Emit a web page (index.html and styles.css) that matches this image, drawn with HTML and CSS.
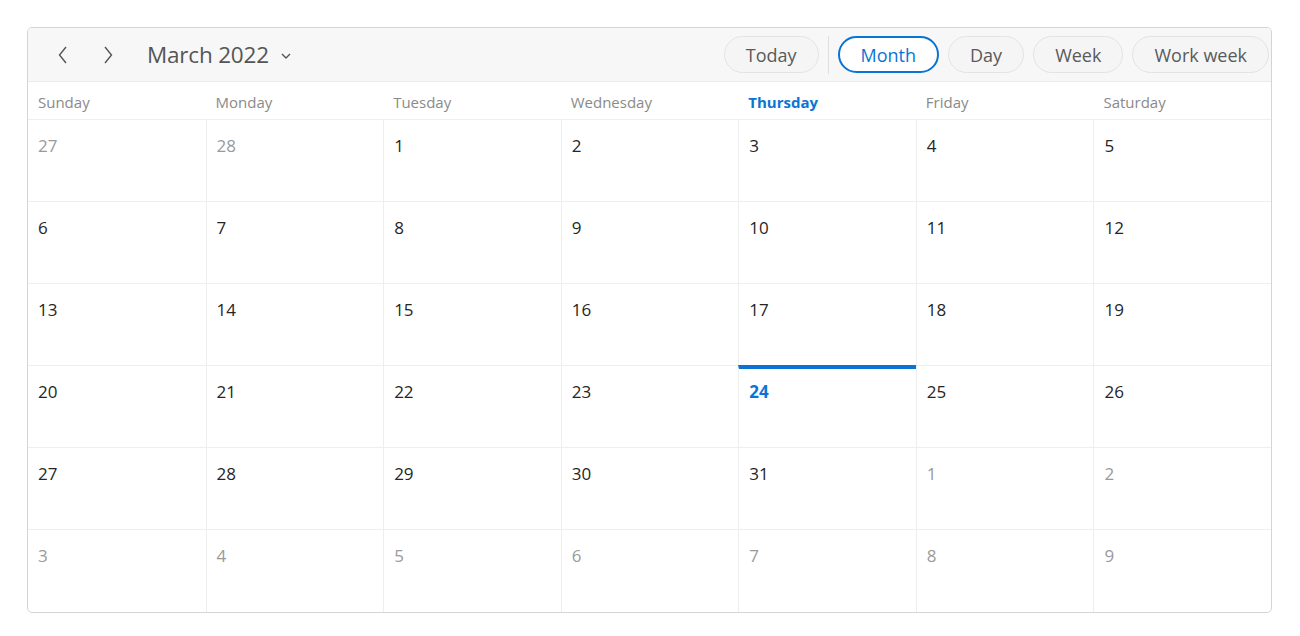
FILE: index.html
```html
<!DOCTYPE html>
<html lang="en">
<head>
  <meta charset="UTF-8">
  <title>Calendar</title>
  <link rel="stylesheet" href="styles.css">
</head>
<body>
  <div class="calendar">
    <div class="toolbar">
      <div class="nav">
        <button class="nav-btn" aria-label="Previous">
          <svg width="10" height="18" viewBox="0 0 10 18"><path d="M8 1 L1.5 9 L8 17" fill="none" stroke="#555" stroke-width="1.4"/></svg>
        </button>
        <button class="nav-btn" aria-label="Next">
          <svg width="10" height="18" viewBox="0 0 10 18"><path d="M2 1 L8.5 9 L2 17" fill="none" stroke="#555" stroke-width="1.4"/></svg>
        </button>
        <div class="title">March 2022
          <svg width="12" height="8" viewBox="0 0 12 8"><path d="M2 2 L6 6 L10 2" fill="none" stroke="#555" stroke-width="1.4"/></svg>
        </div>
      </div>
      <div class="views">
        <button class="pill">Today</button>
        <span class="sep"></span>
        <button class="pill active">Month</button>
        <button class="pill">Day</button>
        <button class="pill">Week</button>
        <button class="pill">Work week</button>
      </div>
    </div>
    <div class="weekdays">
      <div>Sunday</div>
      <div>Monday</div>
      <div>Tuesday</div>
      <div>Wednesday</div>
      <div class="current">Thursday</div>
      <div>Friday</div>
      <div>Saturday</div>
    </div>
    <div class="grid">
      <div class="cell other">27</div>
      <div class="cell other">28</div>
      <div class="cell">1</div>
      <div class="cell">2</div>
      <div class="cell">3</div>
      <div class="cell">4</div>
      <div class="cell">5</div>
      <div class="cell">6</div>
      <div class="cell">7</div>
      <div class="cell">8</div>
      <div class="cell">9</div>
      <div class="cell">10</div>
      <div class="cell">11</div>
      <div class="cell">12</div>
      <div class="cell">13</div>
      <div class="cell">14</div>
      <div class="cell">15</div>
      <div class="cell">16</div>
      <div class="cell">17</div>
      <div class="cell">18</div>
      <div class="cell">19</div>
      <div class="cell">20</div>
      <div class="cell">21</div>
      <div class="cell">22</div>
      <div class="cell">23</div>
      <div class="cell today">24</div>
      <div class="cell">25</div>
      <div class="cell">26</div>
      <div class="cell">27</div>
      <div class="cell">28</div>
      <div class="cell">29</div>
      <div class="cell">30</div>
      <div class="cell">31</div>
      <div class="cell other">1</div>
      <div class="cell other">2</div>
      <div class="cell other">3</div>
      <div class="cell other">4</div>
      <div class="cell other">5</div>
      <div class="cell other">6</div>
      <div class="cell other">7</div>
      <div class="cell other">8</div>
      <div class="cell other">9</div>
    </div>
  </div>
</body>
</html>
```

FILE: styles.css
```css
body { margin: 0; padding: 27px 28px 0 27px; background: #fff; font-family: "Open Sans", "Noto Sans", sans-serif; color: #222; }
.calendar { width: 1243px; border: 1px solid #d4d4d4; border-radius: 5px; overflow: hidden; }

.toolbar { height: 53px; display: flex; align-items: center; justify-content: space-between; background: #f7f7f7; border-bottom: 1px solid #ebebeb; }
.nav { display: flex; align-items: center; padding-left: 20px; }
.nav-btn { width: 30px; height: 30px; margin-right: 15px; border: none; background: none; padding: 0; display: flex; align-items: center; justify-content: center; cursor: pointer; }
.title { display: flex; align-items: center; gap: 11px; margin-left: 9px; font-size: 22.5px; color: #555; letter-spacing: -0.2px; }
.title svg { margin-top: 2px; }

.views { display: flex; align-items: center; gap: 9px; padding-right: 2px; }
.pill { height: 37px; padding: 0 21px; border: 1px solid #e3e3e3; border-radius: 19px; background: #f5f5f5; color: #5a5a5a; font-family: inherit; font-size: 18px; cursor: pointer; }
.pill.active { border: 2px solid #0a74d4; background: #fff; color: #0a74d4; }
.sep { width: 1px; height: 38px; background: #e0e0e0; }

.weekdays { display: grid; grid-template-columns: repeat(7, 1fr); height: 37px; border-bottom: 1px solid #eee; }
.weekdays div { padding: 10px 0 0 10px; font-size: 15px; color: #8a8a8a; }
.weekdays .current { color: #0a74d4; font-weight: 700; }

.grid { display: grid; grid-template-columns: repeat(7, 1fr); grid-auto-rows: 82px; }
.cell { padding: 14px 0 0 10px; font-size: 17px; color: #252525; border-left: 1px solid #eee; border-bottom: 1px solid #eee; box-sizing: border-box; }
.cell:nth-child(7n+1) { border-left: none; }
.cell:nth-last-child(-n+7) { border-bottom: none; }
.cell.other { color: #9a9a9a; }
.cell.today { border-top: 4px solid #0a74d4; padding-top: 11px; color: #0a74d4; font-weight: 700; margin-top: -1px; }
```
